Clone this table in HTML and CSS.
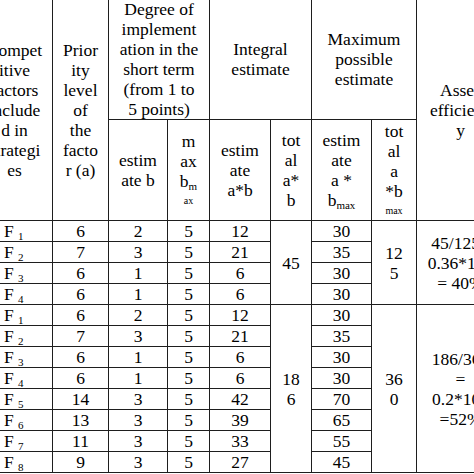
FILE: index.html
```html
<!DOCTYPE html>
<html>
<head>
<meta charset="utf-8">
<link rel="stylesheet" href="styles.css">
</head>
<body>
<table class="grid">
<colgroup>
<col class="c1"><col class="c2"><col class="c3"><col class="c4"><col class="c5"><col class="c6"><col class="c7"><col class="c8"><col class="c9">
</colgroup>
<tr class="head1">
<th rowspan="2" class="first">Compet<br>itive<br>factors<br>include<br>d in<br>strategi<br>es</th>
<th rowspan="2">Prior<br>ity<br>level<br>of<br>the<br>facto<br>r (a)</th>
<th colspan="2">Degree of<br>implement<br>ation in the<br>short term<br>(from 1 to<br>5 points)</th>
<th colspan="2">Integral<br>estimate</th>
<th colspan="2">Maximum<br>possible<br>estimate</th>
<th rowspan="2">Asses<br>efficienc<br>y</th>
</tr>
<tr class="head2">
<th>estim<br>ate b</th>
<th>m<br>ax<br>b<span class="sub">m</span><span class="tiny">ax</span></th>
<th>estim<br>ate<br>a*b</th>
<th>tot<br>al<br>a*<br>b</th>
<th>estim<br>ate<br>a *<br>b<span class="sub">max</span></th>
<th>tot<br>al<br>a<br>*b<span class="tiny">max</span></th>
</tr>
<tr>
<td class="f">F <span class="sub">1</span></td><td>6</td><td>2</td><td>5</td><td>12</td>
<td rowspan="4">45</td><td>30</td><td rowspan="4">12<br>5</td>
<td rowspan="4">45/125=<br>0.36*100<br>= 40%</td>
</tr>
<tr><td class="f">F <span class="sub">2</span></td><td>7</td><td>3</td><td>5</td><td>21</td><td>35</td></tr>
<tr><td class="f">F <span class="sub">3</span></td><td>6</td><td>1</td><td>5</td><td>6</td><td>30</td></tr>
<tr><td class="f">F <span class="sub">4</span></td><td>6</td><td>1</td><td>5</td><td>6</td><td>30</td></tr>
<tr>
<td class="f">F <span class="sub">1</span></td><td>6</td><td>2</td><td>5</td><td>12</td>
<td rowspan="8">18<br>6</td><td>30</td><td rowspan="8">36<br>0</td>
<td rowspan="8">186/360<br>=<br>0.2*100<br>=52%</td>
</tr>
<tr><td class="f">F <span class="sub">2</span></td><td>7</td><td>3</td><td>5</td><td>21</td><td>35</td></tr>
<tr><td class="f">F <span class="sub">3</span></td><td>6</td><td>1</td><td>5</td><td>6</td><td>30</td></tr>
<tr><td class="f">F <span class="sub">4</span></td><td>6</td><td>1</td><td>5</td><td>6</td><td>30</td></tr>
<tr><td class="f">F <span class="sub">5</span></td><td>14</td><td>3</td><td>5</td><td>42</td><td>70</td></tr>
<tr><td class="f">F <span class="sub">6</span></td><td>13</td><td>3</td><td>5</td><td>39</td><td>65</td></tr>
<tr><td class="f">F <span class="sub">7</span></td><td>11</td><td>3</td><td>5</td><td>33</td><td>55</td></tr>
<tr><td class="f">F <span class="sub">8</span></td><td>9</td><td>3</td><td>5</td><td>27</td><td>45</td></tr>
</table>
</body>
</html>
```
FILE: styles.css
```css
html, body {
  margin: 0;
  padding: 0;
  background: #ffffff;
  overflow: hidden;
  width: 474px;
  height: 474px;
}
.grid {
  border-collapse: collapse;
  table-layout: fixed;
  width: 534px;
  margin-left: -30px;
  margin-top: -2px;
  font-family: "Liberation Serif", "Times New Roman", serif;
  font-size: 17.5px;
  line-height: 20px;
  color: #000000;
}
.c1 { width: 82px; }
.c2 { width: 56px; }
.c3 { width: 59px; }
.c4 { width: 42px; }
.c5 { width: 61px; }
.c6 { width: 41px; }
.c7 { width: 60px; }
.c8 { width: 45px; }
.c9 { width: 88px; }
.grid th,
.grid td {
  border: 1px solid #1e1e1e;
  padding: 0;
  text-align: center;
  vertical-align: middle;
  font-weight: normal;
  white-space: nowrap;
}
.head1 th { height: 119px; }
.head2 th { height: 100px; }
.grid th.first { padding-left: 6px; }
.grid td { height: 20px; }
.grid td.f {
  text-align: left;
  padding-left: 33px;
}
.sub {
  font-size: 11px;
  vertical-align: -3px;
  line-height: 0;
}
.tiny {
  display: block;
  font-size: 10px;
  line-height: 16px;
  padding-top: 2px;
}
```
